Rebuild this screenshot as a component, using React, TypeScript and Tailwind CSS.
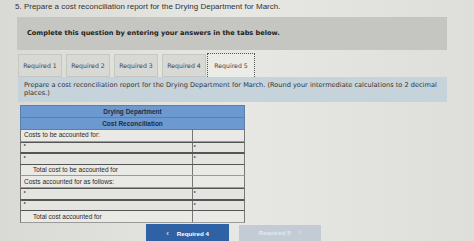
export default function App() {
  const tabs = ["Required 1", "Required 2", "Required 3", "Required 4"];

  const rows: { label: string; indent?: boolean; input?: boolean }[] = [
    { label: "Costs to be accounted for:" },
    { label: "", input: true },
    { label: "", input: true },
    { label: "Total cost to be accounted for", indent: true },
    { label: "Costs accounted for as follows:" },
    { label: "", input: true },
    { label: "", input: true },
    { label: "Total cost accounted for", indent: true },
  ];

  return (
    <div
      className="w-[474px] h-[241px] overflow-hidden bg-linear-to-r from-[#d9d9d5] via-[#e7e7e3] to-[#dededa] text-[#2a2a2a]"
      style={{ fontFamily: '"Liberation Sans", Arial, sans-serif' }}
    >
      <div className="h-[14px] pl-[15px] pt-[1px] text-[8px] leading-[12px] text-[#333]">
        5. Prepare a cost reconciliation report for the Drying Department for March.
      </div>

      <div className="ml-[17px] mt-[3px] w-[430px] h-[33px] bg-[#c5c5c2] flex items-center pl-[10px]">
        <span
          className="text-[6.6px] font-bold text-[#222]"
          style={{ fontFamily: '"DejaVu Sans", Verdana, sans-serif' }}
        >
          Complete this question by entering your answers in the tabs below.
        </span>
      </div>

      <div
        className="ml-[18px] mt-[3px] flex items-end gap-[4px] h-[24px] text-[6.2px] text-[#444]"
        style={{ fontFamily: '"DejaVu Sans", Verdana, sans-serif' }}
      >
        {tabs.map((t) => (
          <div
            key={t}
            className="w-[44px] h-[23px] bg-[#d8d8d4] border border-[#c6c6c2] flex items-center justify-center"
          >
            {t}
          </div>
        ))}
        <div className="-ml-[3px] w-[48px] h-[24px] bg-[#ebebe7] border border-dotted border-[#555] border-b-0 flex items-center justify-center">
          Required 5
        </div>
      </div>

      <div
        className="ml-[18px] w-[429px] h-[25px] bg-[#c7d3da] pl-[6px] pt-[4px] text-[6.6px] leading-[8px] text-[#333]"
        style={{ fontFamily: '"DejaVu Sans", Verdana, sans-serif' }}
      >
        Prepare a cost reconciliation report for the Drying Department for March. (Round your intermediate calculations to 2 decimal
        <br />
        places.)
      </div>

      <div className="ml-[20px] mt-[3px] w-[225px] text-[6.5px]">
        <div className="border border-[#5b7fa8] bg-[#6c9ad0] text-[#1f2d45] font-bold">
          <div className="h-[12px] flex items-center justify-center border-b border-[#5b7fa8]">Drying Department</div>
          <div className="h-[11px] flex items-center justify-center">Cost Reconciliation</div>
        </div>
        {rows.map((r, i) => (
          <div
            key={i}
            className={`flex h-[11.6px] ${r.input ? "border-y border-[#555]" : "border-b border-[#9a9a98]"} border-x border-x-[#777] bg-[#e9e9e5]`}
          >
            <div
              className={`flex-1 flex items-center border-r border-[#777] ${r.indent ? "pl-[12px]" : "pl-[3px]"} ${r.input ? "bg-[#e4e4e0]" : ""}`}
            >
              {r.input ? <span className="text-[4px] text-[#333] -mt-[4px]">▸</span> : r.label}
            </div>
            <div className={`w-[51px] flex items-start pl-[1px] ${r.input ? "bg-[#e4e4e0]" : ""}`}>
              {r.input ? <span className="text-[4px] text-[#333]">▸</span> : null}
            </div>
          </div>
        ))}
      </div>

      <div className="ml-[146px] mt-[1px] flex items-start gap-[10px] text-[6.2px] font-bold">
        <div className="w-[83px] h-[20px] bg-[#2f62a5] text-white flex items-center justify-center gap-[8px]">
          <span className="text-[8px] font-normal">‹</span>
          <span>Required 4</span>
        </div>
        <div className="mt-[1px] w-[82px] h-[16px] bg-[#c3ccd5] text-[#e4e9ee] flex items-center justify-center gap-[8px]">
          <span>Required 5</span>
          <span className="text-[8px] font-normal">›</span>
        </div>
      </div>
    </div>
  );
}
